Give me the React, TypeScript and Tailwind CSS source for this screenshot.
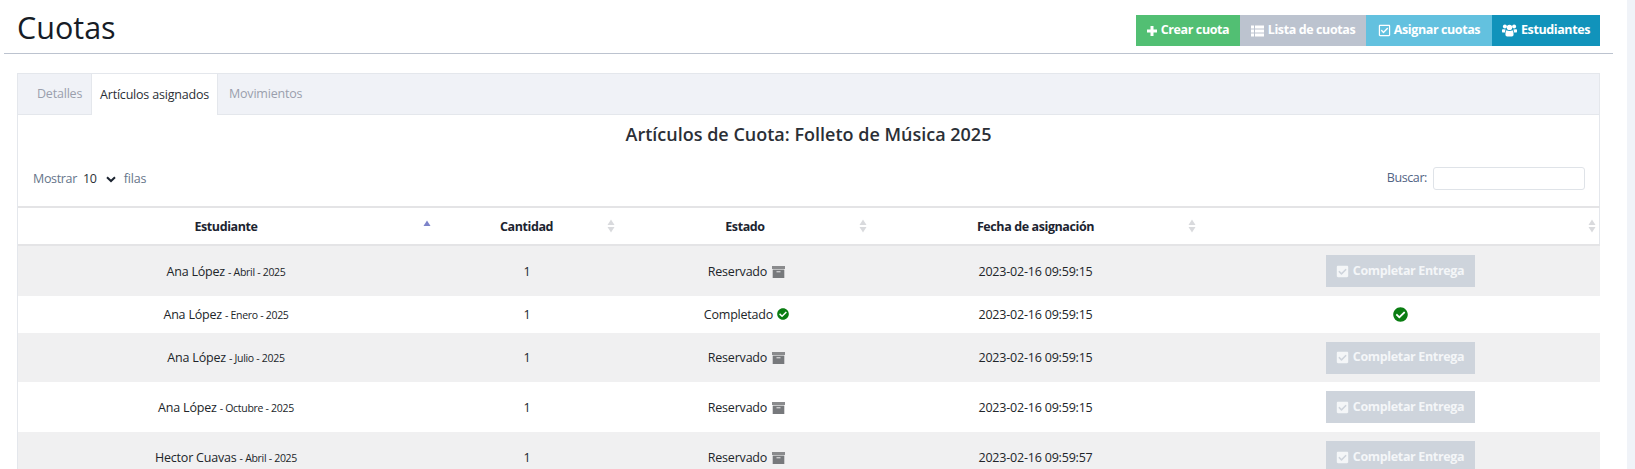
import { FaCheckCircle, FaCheckSquare, FaRegCheckSquare } from 'react-icons/fa';

const HEADERS = [
  { label: 'Estudiante', width: 'w-[416px]', active: true },
  { label: 'Cantidad', width: 'w-[185px]' },
  { label: 'Estado', width: 'w-[252px]' },
  { label: 'Fecha de asignación', width: 'w-[329px]' },
  { label: '', width: 'w-[400px]' },
];

const ROWS = [
  { name: 'Ana López', sub: 'Abril - 2025', done: false, date: '2023-02-16 09:59:15', height: 'h-[51px]', bg: 'bg-[#f0f0f1]' },
  { name: 'Ana López', sub: 'Enero - 2025', done: true, date: '2023-02-16 09:59:15', height: 'h-[37px]', bg: 'bg-white' },
  { name: 'Ana López', sub: 'Julio - 2025', done: false, date: '2023-02-16 09:59:15', height: 'h-[49px]', bg: 'bg-[#f0f0f1]' },
  { name: 'Ana López', sub: 'Octubre - 2025', done: false, date: '2023-02-16 09:59:15', height: 'h-[50px]', bg: 'bg-white' },
  { name: 'Hector Cuavas', sub: 'Abril - 2025', done: false, date: '2023-02-16 09:59:57', height: 'h-[50px]', bg: 'bg-[#f0f0f1]' },
];

function SortIcon({ active, last }: { active?: boolean; last?: boolean }) {
  return (
    <svg
      width="8"
      height="14"
      viewBox="0 0 8 14"
      className={`absolute ${active ? 'top-[12px] right-[3px]' : last ? 'top-[11px] right-[4px]' : 'top-[11px] right-[4px]'}`}
    >
      <path d="M4 0.5 L7.5 6 L0.5 6 Z" fill={active ? '#7c83c9' : '#d9dadd'} />
      {!active && <path d="M0.5 8 L7.5 8 L4 13.5 Z" fill="#d9dadd" />}
    </svg>
  );
}

function ListIcon() {
  return (
    <svg width="13" height="12" viewBox="0 0 13 12" fill="currentColor">
      <rect x="0" y="0.5" width="3" height="3" />
      <rect x="4" y="0.5" width="9" height="3" />
      <rect x="0" y="4.5" width="3" height="3" />
      <rect x="4" y="4.5" width="9" height="3" />
      <rect x="0" y="8.5" width="3" height="3" />
      <rect x="4" y="8.5" width="9" height="3" />
    </svg>
  );
}

function UsersIcon() {
  return (
    <svg width="15" height="13" viewBox="0 0 15 13" fill="currentColor">
      <circle cx="2.9" cy="2.6" r="2" />
      <circle cx="12.1" cy="2.6" r="2" />
      <path d="M0 5.6 Q1.2 5 3.6 5.6 Q3 7.2 3 8.6 L1.2 8.6 Q0 8.6 0 7.4 Z" />
      <path d="M15 5.6 Q13.8 5 11.4 5.6 Q12 7.2 12 8.6 L13.8 8.6 Q15 8.6 15 7.4 Z" />
      <circle cx="7.5" cy="3.4" r="2.7" />
      <path d="M4.3 6.3 Q7.5 7.6 10.7 6.3 Q11.6 7.4 11.6 10.6 Q11.6 12.6 9.8 12.6 L5.2 12.6 Q3.4 12.6 3.4 10.6 Q3.4 7.4 4.3 6.3 Z" />
    </svg>
  );
}

function PlusIcon() {
  return (
    <svg width="10" height="10" viewBox="0 0 10 10" fill="currentColor">
      <rect x="3.5" y="0" width="3" height="10" />
      <rect x="0" y="3.5" width="10" height="3" />
    </svg>
  );
}

function ArchiveIcon() {
  return (
    <svg width="13" height="12" viewBox="0 0 13 12" className="ml-[2px] inline align-[-2px]">
      <rect x="0" y="0" width="13" height="3" fill="#8a8b8d" />
      <rect x="0.7" y="3.6" width="11.6" height="8.4" fill="#77797c" />
      <rect x="4.5" y="5" width="4" height="1.4" fill="#c9c9cb" />
    </svg>
  );
}

export default function App() {
  return (
    <div className="flex h-[469px] overflow-hidden bg-white font-['Open_Sans',sans-serif] text-[12.5px] tracking-[-0.2px] text-[#212529]">
      <main className="w-[1627px] shrink-0">
        <header className="ml-1 flex h-[54px] w-[1609px] justify-between border-b border-[#bcc3cf] pl-[13px] pr-[13px]">
          <h1 className="pt-[6px] text-[30.5px] leading-[42px] font-medium tracking-normal text-[#161c26]">Cuotas</h1>
          <div className="mt-[15px] flex h-[31px] font-bold tracking-[-0.4px] text-white">
            <a className="flex w-[104px] items-center justify-center gap-1 bg-[#52bf73]"><PlusIcon />Crear cuota</a>
            <a className="flex w-[126px] items-center justify-center gap-1 bg-[#bcc3cf]"><ListIcon />Lista de cuotas</a>
            <a className="flex w-[126px] items-center justify-center gap-[3px] bg-[#63c1df]"><FaRegCheckSquare className="text-[13px]" />Asignar cuotas</a>
            <a className="flex w-[108px] items-center justify-center gap-1 bg-[#1193bb]"><UsersIcon />Estudiantes</a>
          </div>
        </header>

        <section className="mt-[19px] ml-[17px] w-[1583px] border border-[#e4e7ec]">
          <nav className="flex h-[41px] border-b border-[#e4e7ec] bg-[#f0f2f7] pl-[19px] text-[#9a9fad]">
            <a className="flex w-[54px] items-center pt-px">Detalles</a>
            <a className="-mb-px flex w-[127px] items-center justify-center border-x border-[#e4e7ec] bg-white pt-px text-[#2b2f36]">Artículos asignados</a>
            <a className="flex items-center pt-px pl-[11px]">Movimientos</a>
          </nav>

          <h2 className="pt-[7px] text-center text-[18px] leading-[24px] font-semibold tracking-normal text-[#2b2f36]">Artículos de Cuota: Folleto de Música 2025</h2>

          <div className="flex h-[60px] items-center justify-between pt-[5px] pr-[14px] pl-[15px]">
            <div className="mt-[2px] flex items-center text-[#66758a]">
              <span className="tracking-[-0.35px]">Mostrar</span>
              <span className="ml-[6px] text-[#2b2f36]">10</span>
              <svg width="10" height="7" viewBox="0 0 10 7" className="ml-[9px]"><path d="M1 1.2 L5 5 L9 1.2" fill="none" stroke="#1c2430" strokeWidth="2" /></svg>
              <span className="ml-[8px]">filas</span>
            </div>
            <label className="flex items-center text-[#526484]">
              <span className="tracking-[-0.4px]">Buscar:</span>
              <input className="ml-[6px] h-[23px] w-[152px] rounded-[3px] border border-[#dfe3e8] bg-white" />
            </label>
          </div>

          <table className="w-[1582px] table-fixed border-collapse">
            <thead>
              <tr className="h-[38px] border-y-2 border-[#e4e4e6]">
                {HEADERS.map(h => (
                  <th key={h.label || 'actions'} className={`relative pt-[2px] text-center font-bold tracking-[-0.4px] text-[#1c2430] ${h.width}`}>
                    {h.label}
                    <SortIcon active={h.active} last={!h.label} />
                  </th>
                ))}
              </tr>
            </thead>
            <tbody>
              {ROWS.map(r => (
                <tr key={r.name + r.sub} className={`${r.height} ${r.bg}`}>
                  <td className="pt-[2px] text-center">
                    {r.name} <span className="text-[10.5px] tracking-[-0.3px]">- {r.sub}</span>
                  </td>
                  <td className="pt-[2px] pl-px text-center">1</td>
                  <td className="pt-[2px] pl-[3px] text-center">
                    {r.done ? 'Completado' : 'Reservado'}{' '}
                    {r.done
                      ? <FaCheckCircle className="ml-px inline text-[12px] text-[#0a7d12] align-[-1px]" />
                      : <ArchiveIcon />}
                  </td>
                  <td className="pt-[2px] text-center">{r.date}</td>
                  <td className="text-center">
                    {r.done ? (
                      <FaCheckCircle className="inline text-[15px] text-[#0a7d12]" />
                    ) : (
                      <button className="inline-flex h-[32px] w-[149px] items-center justify-center gap-1 bg-[#ced4dc] font-bold tracking-[-0.35px] text-[#f4f6f8]">
                        <FaCheckSquare className="text-[13px]" />Completar Entrega
                      </button>
                    )}
                  </td>
                </tr>
              ))}
            </tbody>
          </table>
        </section>
      </main>
      <aside className="flex-1 bg-[#f0f3f8]" />
    </div>
  );
}
